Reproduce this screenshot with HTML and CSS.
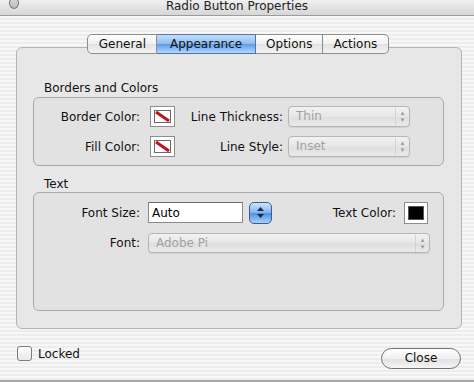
FILE: index.html
```html
<!DOCTYPE html>
<html lang="en">
<head>
    <meta charset="UTF-8">
    <title>Radio Button Properties</title>
    <link rel="stylesheet" href="styles.css">
</head>
<body>
    <div class="window">
        <!-- Title bar -->
        <div class="titlebar">
            <span class="close-dot"></span>
            <span class="title">Radio Button Properties</span>
        </div>

        <!-- Tabs -->
        <div class="tabs">
            <span class="tab">General</span>
            <span class="tab selected">Appearance</span>
            <span class="tab">Options</span>
            <span class="tab">Actions</span>
        </div>

        <div class="pane">
            <div class="group-label">Borders and Colors</div>
            <div class="group borders">
                <div class="row">
                    <span class="label">Border Color:</span>
                    <span class="swatch"><svg width="17" height="13"><rect x="0.5" y="0.5" width="16" height="12" fill="#fff" stroke="#6a6a6a"/><line x1="2" y1="2" x2="15" y2="11" stroke="#c0141c" stroke-width="3"/></svg></span>
                    <span class="label wide">Line Thickness:</span>
                    <span class="popup disabled">Thin<span class="arrows">▴<br>▾</span></span>
                </div>
                <div class="row">
                    <span class="label">Fill Color:</span>
                    <span class="swatch"><svg width="17" height="13"><rect x="0.5" y="0.5" width="16" height="12" fill="#fff" stroke="#6a6a6a"/><line x1="2" y1="2" x2="15" y2="11" stroke="#c0141c" stroke-width="3"/></svg></span>
                    <span class="label wide">Line Style:</span>
                    <span class="popup disabled">Inset<span class="arrows">▴<br>▾</span></span>
                </div>
            </div>

            <div class="group-label">Text</div>
            <div class="group text">
                <div class="row">
                    <span class="label">Font Size:</span>
                    <span class="field">Auto</span>
                    <span class="stepper"><svg width="9" height="13"><polygon points="4.5,1 8,5 1,5" fill="#1a2a50"/><polygon points="4.5,12 8,8 1,8" fill="#1a2a50"/></svg></span>
                    <span class="label color-label">Text Color:</span>
                    <span class="swatch black"><span class="fill"></span></span>
                </div>
                <div class="row">
                    <span class="label">Font:</span>
                    <span class="popup disabled long">Adobe Pi<span class="arrows">▴<br>▾</span></span>
                </div>
            </div>
        </div>

        <!-- Footer -->
        <div class="footer">
            <label class="check"><span class="box"></span>Locked</label>
            <span class="button">Close</span>
        </div>
    </div>
</body>
</html>
```

FILE: styles.css
```css
/* Reset */
body {
    margin: 0;
    padding: 0;
    font-family: "DejaVu Sans", sans-serif;
    font-size: 12px;
    color: #111;
}

.window {
    width: 474px;
    height: 382px;
    box-sizing: border-box;
    background: repeating-linear-gradient(#f7f7f7 0 2px, #ededed 2px 4px);
    border-bottom: 2px solid #a8a8a8;
    overflow: hidden;
}

/* Title bar */
.titlebar {
    height: 15px;
    background: linear-gradient(#f0f0f0, #d6d6d6);
    border-bottom: 1px solid #9c9c9c;
    display: flex;
    justify-content: center;
    align-items: center;
    position: relative;
}

.title {
    font-size: 12px;
    color: #222;
    margin-top: -3px;
}

.close-dot {
    position: absolute;
    left: 9px;
    top: -3px;
    width: 8px;
    height: 10px;
    border: 1px solid #777;
    border-radius: 50%;
    background: linear-gradient(#ddd, #bbb);
}

/* Tabs */
.tabs {
    display: flex;
    justify-content: center;
    margin: 18px 0 -7px 0;
    position: relative;
    z-index: 1;
    padding-left: 2px;
}

.tab {
    height: 18px;
    line-height: 18px;
    padding: 0 10px;
    border: 1px solid #8c8c8c;
    border-left: none;
    background: linear-gradient(#ffffff, #f0f0f0 50%, #e2e2e2 51%, #f4f4f4);
    color: #111;
}

.tab:first-child {
    border-left: 1px solid #8c8c8c;
    border-radius: 5px 0 0 5px;
    padding-left: 11px;
}

.tab:last-child {
    border-radius: 0 5px 5px 0;
    padding-right: 11px;
}

.tab.selected {
    background: linear-gradient(#c4defa, #8cbdf2 50%, #5b9ce9 51%, #b4d8fb);
    border-color: #5274a8;
    padding: 0 13px;
}

/* Pane */
.pane {
    margin: 0 12px 0 16px;
    height: 282px;
    background: #e7e7e7;
    border: 1px solid #b4b4b4;
    border-radius: 6px;
    padding: 33px 17px 0 16px;
    box-sizing: border-box;
}

.group-label {
    height: 14px;
    line-height: 14px;
    padding-left: 11px;
    color: #111;
}

.group {
    margin-top: 2px;
    border: 1px solid #a9a9a9;
    border-radius: 6px;
    background: #e2e2e2;
    padding: 8px 0 0 0;
    display: flex;
    flex-direction: column;
    gap: 9px;
}

.group.borders {
    height: 69px;
    box-sizing: border-box;
    margin-bottom: 11px;
}

.group.text {
    height: 119px;
    box-sizing: border-box;
    margin-top: 1px;
    padding-top: 9px;
}

.row {
    display: flex;
    align-items: center;
    height: 21px;
}

.label {
    width: 106px;
    text-align: right;
    flex: none;
}

.label.wide {
    width: 108px;
    margin-right: 5px;
}

.label.color-label {
    width: 124px;
    margin-right: 8px;
}

/* Colour wells */
.swatch {
    width: 23px;
    height: 19px;
    border: 1px solid #8e8e8e;
    background: #fff;
    margin-left: 10px;
    display: flex;
    align-items: center;
    justify-content: center;
    flex: none;
}

.swatch.black {
    margin-left: 0;
    width: 22px;
    height: 20px;
}

.swatch.black .fill {
    width: 14px;
    height: 12px;
    background: #000;
    border: 1px solid #555;
}

/* Pop-up menus */
.popup {
    position: relative;
    width: 122px;
    height: 21px;
    line-height: 19px;
    box-sizing: border-box;
    border: 1px solid #b6b6b6;
    border-radius: 4px;
    background: linear-gradient(#f2f2f2, #e6e6e6 50%, #dedede 51%, #eaeaea);
    padding-left: 7px;
    box-shadow: 0 1px 1px #cfcfcf;
}

.popup.disabled {
    color: #a2a2a2;
}

.popup.long {
    width: 282px;
    height: 20px;
    line-height: 18px;
    margin-left: 8px;
}

.arrows {
    position: absolute;
    right: 0;
    top: 1px;
    width: 14px;
    height: 17px;
    border-left: 1px solid #d2d2d2;
    font-size: 7px;
    line-height: 7px;
    padding-top: 2px;
    box-sizing: border-box;
    text-align: center;
    color: #9a9a9a;
}

/* Text field and stepper */
.field {
    width: 95px;
    height: 21px;
    line-height: 21px;
    box-sizing: border-box;
    margin-left: 8px;
    padding-left: 3px;
    background: #fff;
    border: 1px solid #8a8a8a;
    border-top-color: #6c6c6c;
    color: #000;
}

.stepper {
    width: 23px;
    height: 22px;
    box-sizing: border-box;
    margin-left: 6px;
    border: 1px solid #3c5a96;
    border-radius: 5px;
    background: linear-gradient(#d0e4fb, #7fb3f0 50%, #4d8fe2 51%, #a9d0fa);
    display: flex;
    align-items: center;
    justify-content: center;
}

/* Footer */
.footer {
    display: flex;
    justify-content: space-between;
    align-items: flex-start;
    padding: 17px 13px 0 17px;
}

.check {
    display: flex;
    align-items: center;
    gap: 6px;
    height: 15px;
}

.box {
    width: 13px;
    height: 13px;
    border: 1px solid #7c7c7c;
    border-radius: 3px;
    background: linear-gradient(#fdfdfd, #e8e8e8);
}

.button {
    margin-top: 2px;
    width: 78px;
    height: 19px;
    line-height: 19px;
    text-align: center;
    border: 1px solid #6e6e6e;
    border-radius: 11px;
    background: linear-gradient(#ffffff, #efefef 50%, #e0e0e0 51%, #f6f6f6);
    color: #111;
}
```
